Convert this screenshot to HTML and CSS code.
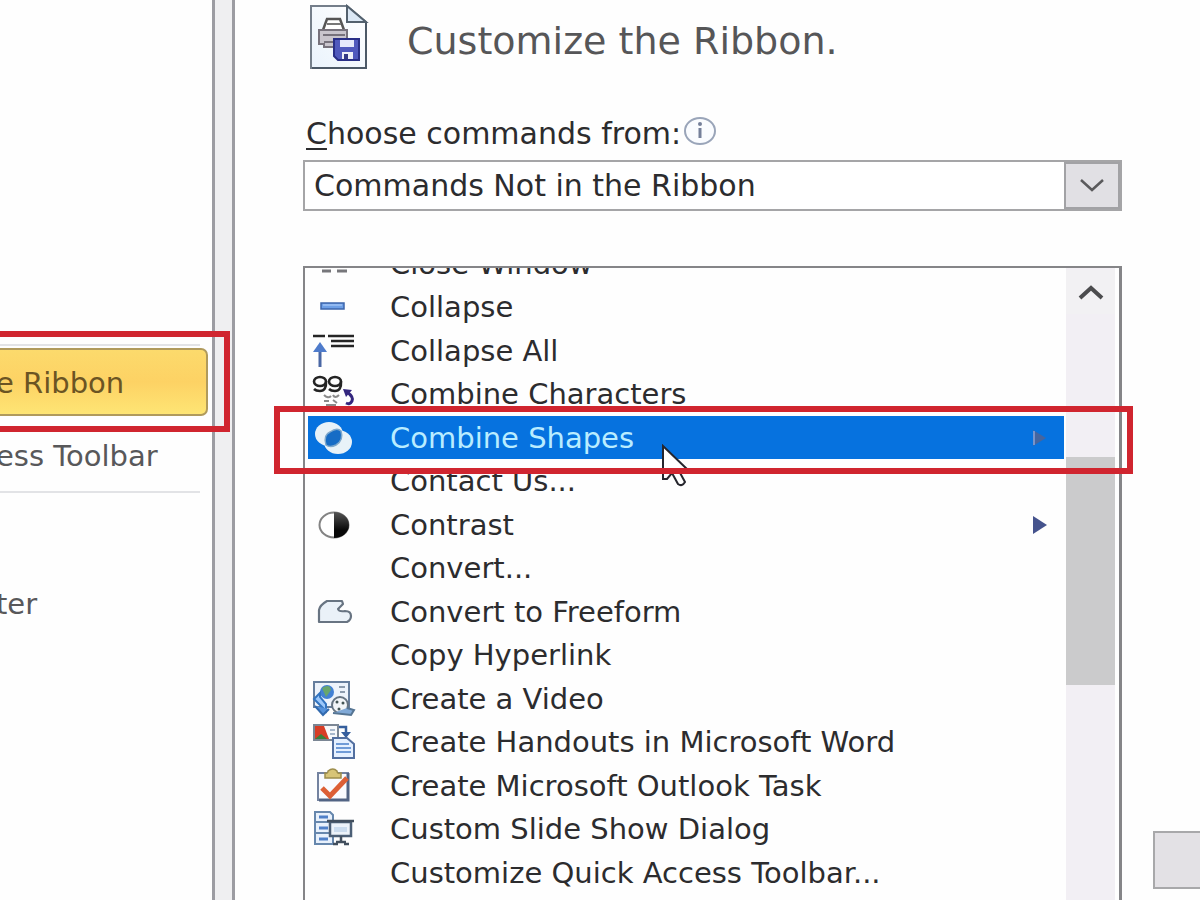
FILE: index.html
```html
<!DOCTYPE html>
<html lang="en">
<head>
<meta charset="utf-8">
<title>Customize the Ribbon</title>
<link rel="stylesheet" href="styles.css">
</head>
<body>
<div class="dialog">
  <nav class="sidebar">
    <div class="nav-current">
      <button class="nav-item selected" type="button">e Ribbon</button>
      <span class="callout callout-nav"></span>
    </div>
    <button class="nav-item" type="button">ess Toolbar</button>
    <hr class="divider">
    <button class="nav-item" type="button">ter</button>
  </nav>
  <div class="gutter"></div>
  <main class="content">
    <section class="chooser">
      <header class="heading">
        <svg class="heading-icon" viewBox="0 0 60 66" aria-hidden="true">
          <defs><linearGradient id="paper" x1="1" y1="0" x2="0" y2="1"><stop offset="0" stop-color="#fff"/><stop offset="1" stop-color="#eaf3fc"/></linearGradient></defs>
          <path d="M2 2H38L57 18V64H2Z" fill="url(#paper)" stroke="#747e8a" stroke-width="2"/>
          <path d="M57 18V64H3" fill="none" stroke="#4c5967" stroke-width="2"/>
          <path d="M38 2V18H57Z" fill="#dbe8f5" stroke="#53616e" stroke-width="2"/>
          <path d="M14 26L18 15H31L35 26" fill="#fff" stroke="#555" stroke-width="2.5"/>
          <path d="M18 20H32" stroke="#777" stroke-width="2"/>
          <path d="M10 26H38V40H34V43H15V40H10Z" fill="#c9c5cd" stroke="#77727c" stroke-width="2"/>
          <path d="M14 31H36M15 38H33" stroke="#77727c" stroke-width="2"/>
          <path d="M25 35H50V56H29L25 52Z" fill="#5059bd" stroke="#292f87" stroke-width="2"/>
          <path d="M31 36H45V43H31Z" fill="#e5e9fb"/>
          <path d="M33 48H44V55H33Z" fill="#eef0f8"/>
          <path d="M35 50H39V55H35Z" fill="#343a85"/>
        </svg>
        <h1 class="title">Customize the Ribbon.</h1>
      </header>
      <div class="label-row">
        <label class="label" for="source"><u>C</u>hoose commands from:</label>
        <svg class="info" viewBox="0 0 34 30" aria-hidden="true"><ellipse cx="17" cy="15" rx="15" ry="13" fill="#fafcff" stroke="#9aa5b9" stroke-width="2"/><path d="M17 12V22" stroke="#75809a" stroke-width="3"/><circle cx="17" cy="8" r="2" fill="#75809a"/></svg>
      </div>
      <div class="combo">
        <select class="select" id="source"><option>Commands Not in the Ribbon</option></select>
        <span class="combo-arrow"><svg class="chevron" viewBox="0 0 26 16" aria-hidden="true"><path d="M2 2L13 12L24 2" fill="none" stroke="#5a5a5c" stroke-width="2.5"/></svg></span>
      </div>
      <div class="list-frame">
        <div class="list-view">
          <ul class="commands" role="listbox" aria-label="Commands">
            <li class="row" role="option"><svg class="icon" viewBox="0 0 44 40" aria-hidden="true"><path d="M10 27H19M25 27H35" stroke="#77777b" stroke-width="3"/></svg><span class="name">Close Window</span></li>
            <li class="row" role="option"><svg class="icon" viewBox="0 0 44 40" aria-hidden="true"><path d="M9 16H32V22H9Z" fill="#6d9fe6" stroke="#3c66ac" stroke-width="1.5"/><path d="M11 18H30" stroke="#9fc2f5" stroke-width="1.5"/></svg><span class="name">Collapse</span></li>
            <li class="row" role="option"><svg class="icon" viewBox="0 0 44 40" aria-hidden="true"><path d="M1 5H13M16 5H42M19 10H42M19 15H42" stroke="#252525" stroke-width="2.6"/><path d="M8 36V17" stroke="#4a67a4" stroke-width="3"/><path d="M1 21L8 11L15 21Z" fill="#4e7bcb"/></svg><span class="name">Collapse All</span></li>
            <li class="row" role="option"><svg class="icon" viewBox="0 0 44 40" aria-hidden="true"><g fill="none" stroke="#242424" stroke-width="2.6"><ellipse cx="8" cy="7.5" rx="6" ry="4.5"/><path d="M14 7.5Q14.500 17 8 17Q4 17 2 15"/><ellipse cx="23" cy="7.500" rx="6" ry="4.500"/><path d="M29 7.500Q29.500 17 23 17Q19 17 17 15"/></g><path d="M12 21Q16 25 19 22M21 21Q23 25 27 21M12 27H17M21 26L25 29M14 31H24" fill="none" stroke="#8b8b8b" stroke-width="2"/><path d="M35 18Q42 23 40 27Q38 31 34 29" fill="none" stroke="#33267e" stroke-width="3"/><path d="M31 15L40 16L34 23Z" fill="#33267e"/></svg><span class="name">Combine Characters</span></li>
            <li class="row active" role="option" aria-selected="true"><svg class="icon" viewBox="0 0 44 40" aria-hidden="true"><ellipse cx="17" cy="16" rx="14" ry="12" fill="#e8f2f8"/><ellipse cx="26" cy="24" rx="14" ry="12" fill="#e8f2f8"/><path d="M14 27Q11 17 18 14Q25 9 29 13Q32 22 24 27Q18 30 14 27Z" fill="#166cc5" stroke="#7da8cc" stroke-width="1.5"/></svg><span class="name">Combine Shapes</span><svg class="more" viewBox="0 0 16 20" aria-hidden="true"><path d="M1 2L14 10L1 18Z" fill="#45659f"/><path d="M2 3V17" stroke="#7894cb" stroke-width="2"/></svg></li>
            <li class="row" role="option"><span class="icon"></span><span class="name">Contact Us...</span></li>
            <li class="row" role="option"><svg class="icon" viewBox="0 0 44 40" aria-hidden="true"><defs><linearGradient id="shade" x1="0" y1="0" x2="0" y2="1"><stop offset="0" stop-color="#555"/><stop offset=".7" stop-color="#080808"/></linearGradient></defs><ellipse cx="22" cy="20" rx="14.500" ry="12.500" fill="#fff" stroke="#838383" stroke-width="2"/><path d="M22 7A15 13 0 0 1 22 33Z" fill="url(#shade)"/></svg><span class="name">Contrast</span><svg class="more" viewBox="0 0 16 20" aria-hidden="true"><path d="M1 1L15 10L1 19Z" fill="#45538d"/></svg></li>
            <li class="row" role="option"><span class="icon"></span><span class="name">Convert...</span></li>
            <li class="row" role="option"><svg class="icon" viewBox="0 0 44 40" aria-hidden="true"><path d="M7 30V18Q8 13 15 9H30L31 12L26 17Q27 20 33 19Q39 19 39 24Q39 28 35 30Z" fill="#eaf1f8" stroke="#687482" stroke-width="2.2" stroke-linejoin="round"/></svg><span class="name">Convert to Freeform</span></li>
            <li class="row" role="option"><span class="icon"></span><span class="name">Copy Hyperlink</span></li>
            <li class="row" role="option"><svg class="icon" viewBox="0 0 44 40" aria-hidden="true"><path d="M2 3H37V28H2Z" fill="#edf3fb" stroke="#667e9d" stroke-width="2"/><circle cx="15" cy="13" r="7" fill="#4381d4"/><path d="M10 9Q18 4 19 11L14 18Z" fill="#68a66d"/><path d="M27 8H33M28 13H33" stroke="#8c9bad" stroke-width="2"/><path d="M2 20L14 32V25L8 18V14Z" fill="#9bc7fa" stroke="#3274c0" stroke-width="2"/><path d="M3 27L11 36L17 30" fill="#5592db" stroke="#326aae" stroke-width="2"/><circle cx="28" cy="26" r="8" fill="#f2f5f8" stroke="#667482" stroke-width="2"/><circle cx="25" cy="23" r="1.5" fill="#455"/><circle cx="31" cy="24" r="1.5" fill="#455"/><circle cx="27" cy="30" r="1.5" fill="#455"/><path d="M21 34L39 36L42 31L35 29" fill="#80a9d7" stroke="#567593" stroke-width="2"/></svg><span class="name">Create a Video</span></li>
            <li class="row" role="option"><svg class="icon" viewBox="0 0 44 40" aria-hidden="true"><path d="M2 3H26V18H2Z" fill="#f7f8fa" stroke="#7b8694" stroke-width="2"/><path d="M3 4H12L17 17H3Z" fill="#d73d26"/><path d="M3 17L9 12L15 17Z" fill="#38813c"/><path d="M18 8H23M18 12H23" stroke="#a8b8cc" stroke-width="2"/><path d="M27 5H34V12" fill="none" stroke="#365f9d" stroke-width="2.5"/><path d="M29 10H39L34 16Z" fill="#365f9d"/><path d="M21 16H35L42 22V36H21Z" fill="#e5f0ff" stroke="#526fa0" stroke-width="2"/><path d="M24 22H37M24 26H39M24 30H39" stroke="#6f9bd7" stroke-width="2"/></svg><span class="name">Create Handouts in Microsoft Word</span></li>
            <li class="row" role="option"><svg class="icon" viewBox="0 0 44 40" aria-hidden="true"><path d="M6 7H36V34H6Z" fill="#f9fbff" stroke="#7483a0" stroke-width="2"/><path d="M36 7V34H7" fill="none" stroke="#526484" stroke-width="3"/><path d="M13 12V7Q16 8 16 5Q21 1 25 5Q25 8 29 7V12Z" fill="#d7c477" stroke="#9d8d4c" stroke-width="1.5"/><path d="M10 22L18 30L35 12" fill="none" stroke="#dc5f36" stroke-width="5"/></svg><span class="name">Create Microsoft Outlook Task</span></li>
            <li class="row" role="option"><svg class="icon" viewBox="0 0 44 40" aria-hidden="true"><path d="M3 3H18L21 6V35H3Z" fill="#e8f1fc" stroke="#6687ad" stroke-width="2"/><path d="M3 13H20M3 24H20" stroke="#6687ad" stroke-width="2"/><path d="M7 8H16M7 19H16M7 30H16" stroke="#4f80c8" stroke-width="3"/><path d="M18 13H39V27H18Z" fill="#edf3fa" stroke="#4c5f76" stroke-width="2.500"/><path d="M15 12H42M29 27V33M24 33H34M21 35H26M32 35H37" fill="none" stroke="#424f5e" stroke-width="2.500"/><path d="M22 18H35V23H22Z" fill="#cbdcee"/></svg><span class="name">Custom Slide Show Dialog</span></li>
            <li class="row" role="option"><span class="icon"></span><span class="name">Customize Quick Access Toolbar...</span></li>
          </ul>
          <div class="scrollbar">
            <button class="scroll-up" type="button" aria-label="Scroll up"><svg class="chevron" viewBox="0 0 26 16" aria-hidden="true"><path d="M2 14L13 4L24 14" fill="none" stroke="#4c4c4e" stroke-width="4"/></svg></button>
            <div class="thumb"></div>
          </div>
        </div>
        <svg class="cursor" viewBox="0 0 30 44" aria-hidden="true"><path d="M2 2V35L6 35L11 29L17 40Q21 43 24 38L18 27H28Z" fill="#fff" stroke="#26262d" stroke-width="2"/></svg>
        <span class="callout callout-row"></span>
      </div>
    </section>
    <aside class="actions"><button class="action" type="button" aria-label="Add"></button></aside>
  </main>
</div>
</body>
</html>
```
FILE: styles.css
```css
* { box-sizing: border-box; }
body {
  margin: 0;
  background: #fefefe;
  color: #2c2c2e;
  font-family: "DejaVu Sans", sans-serif;
  font-size: 29px;
  line-height: 36px;
}
button, select { font: inherit; color: inherit; margin: 0; }
.dialog { display: flex; height: 100vh; overflow: hidden; }

.sidebar {
  flex: 0 0 212px;
  display: flex;
  flex-direction: column;
  align-items: stretch;
  padding-top: 344px;
  color: #58585a;
}
.nav-current { position: relative; padding: 4px 4px 0 0; }
.nav-current::before { content: ""; display: block; height: 2px; margin: -4px 8px 2px 0; background: #e2e3e6; }
.nav-item {
  display: block;
  border: 0;
  background: none;
  padding: 22px 0;
  text-align: left;
  text-indent: -4px;
  white-space: nowrap;
}
.nav-item.selected {
  width: 100%;
  height: 68px;
  padding: 2px 0 0;
  border: 2px solid #b09a5c;
  border-left: 0;
  border-radius: 0 7px 7px 0;
  background: linear-gradient(#fcda6c, #fdd264 50%, #fee574);
  color: #6b5423;
}
.divider { width: 200px; height: 2px; margin: -5px 0 71px; border: 0; background: #e2e3e6; }
.gutter {
  flex: 0 0 23px;
  border: solid #9c9ca2;
  border-width: 0 3px;
  background: #efeff1;
}

.content { flex: 1; min-width: 0; display: flex; gap: 31px; padding-left: 68px; }
.chooser { flex: 1; min-width: 0; display: flex; flex-direction: column; }
.heading { display: flex; align-items: center; gap: 38px; padding: 4px 0 0 6px; }
.heading-icon { width: 60px; height: 66px; }
.title { margin: 0; padding-top: 8px; font-size: 38px; line-height: 48px; font-weight: 400; color: #565658; white-space: nowrap; }
.label-row { display: flex; align-items: center; gap: 2px; margin: 46px 0 8px 3px; font-size: 30px; }
.label { white-space: nowrap; }
.label u { text-decoration-thickness: 2px; text-underline-offset: 4px; }
.info { width: 34px; height: 30px; margin-bottom: 6px; }
.combo { display: flex; height: 51px; border: 2px solid #a5a5a7; background: #fff; font-size: 30px; }
.select { flex: 1; min-width: 0; appearance: none; border: 0; padding: 0 9px; background: none; }
.combo-arrow {
  width: 56px;
  display: grid;
  place-items: center;
  border: 2px solid #a2a2a5;
  background: #e1e0e4;
}
.chevron { width: 26px; height: 16px; }

.list-frame { position: relative; flex: 1; min-height: 0; margin-top: 55px; }
.list-view {
  display: flex;
  height: 100%;
  overflow: hidden;
  border: solid #858588;
  border-width: 2px 3px 0 2px;
  background: #fefefe;
}
.commands {
  flex: 1;
  display: grid;
  grid-auto-rows: 43px 44px;
  margin: -26px 2px 0 3px;
  padding: 0;
  list-style: none;
}
.row { display: flex; align-items: center; padding: 0 16px 0 4px; }
.icon { flex: none; width: 44px; height: 40px; margin-right: 34px; }
.name { flex: 1; white-space: nowrap; }
.more { width: 16px; height: 20px; }
.active { background: #0672df; color: #b9ecff; }
.scrollbar { width: 49px; margin-right: 4px; padding-top: 2px; background: #f2eff4; }
.scroll-up { display: grid; place-items: center; width: 100%; height: 44px; padding: 0; border: 0; background: #f2f1f3; }
.thumb { height: 228px; margin-top: 143px; background: #cbcbcc; }

.actions { flex: 0 0 47px; display: flex; flex-direction: column; justify-content: flex-end; padding-bottom: 11px; }
.action { height: 58px; border: 2px solid #a8a8aa; border-right: 0; background: #e3e1e5; }

.callout { position: absolute; border: 6px solid #d0252f; pointer-events: none; }
.callout-nav { left: 0; right: -18px; top: -13px; height: 101px; border-left: 0; }
.callout-row { left: -29px; right: -11px; top: 140px; height: 68px; }
.cursor { position: absolute; left: 358px; top: 178px; width: 30px; height: 44px; }
```
